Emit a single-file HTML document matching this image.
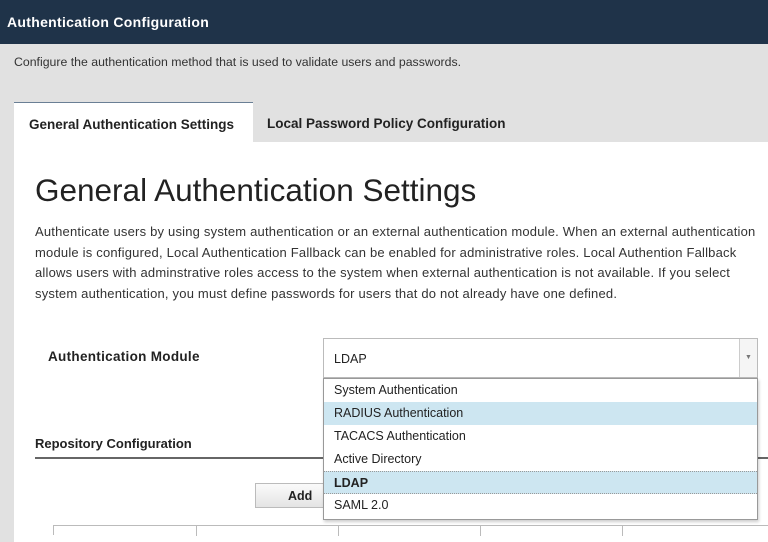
<!DOCTYPE html>
<html><head><style>
*{margin:0;padding:0;box-sizing:border-box}
body{width:768px;height:533px;overflow:hidden;background:#e1e1e1;font-family:"Liberation Sans",Arial,sans-serif;color:#222;position:relative}
.hdr{position:absolute;left:0;top:0;width:768px;height:44px;background:#1f3349;color:#fff;font-weight:bold;font-size:14px;padding:14px 0 0 7px;letter-spacing:.3px}
.sub{position:absolute;left:14px;top:55px;font-size:12.3px;color:#333}
.tab1{position:absolute;left:14px;top:102px;width:239px;height:42px;background:#fff;border-top:1px solid #6a7f95;font-weight:bold;font-size:13.5px;padding:14px 0 0 15px}
.tab2{position:absolute;left:267px;top:116px;font-weight:bold;font-size:13.5px}
.panel{position:absolute;left:14px;top:142px;width:754px;height:400px;background:#fff}
h1{position:absolute;left:35px;top:172px;font-weight:normal;font-size:31.5px;color:#222}
.p{position:absolute;left:35px;top:222px;width:728px;font-size:13px;line-height:20.7px;color:#333;letter-spacing:.2px}
.lbl{position:absolute;left:48px;top:349px;font-weight:bold;font-size:13.5px;letter-spacing:.3px}
.sel{position:absolute;left:323px;top:338px;width:435px;height:40px;border:1px solid #bbb;background:#fff;font-size:12.5px;padding:13px 0 0 10px}
.arr{position:absolute;right:0;top:0;width:18px;height:38px;border-left:1px solid #ccc;background:#f5f5f5;font-size:7px;color:#777;text-align:center;padding-top:15px}
.dd{position:absolute;left:323px;top:378px;width:435px;height:142px;border:1px solid #999;background:#fff;font-size:12.5px;box-shadow:1px 2px 3px rgba(0,0,0,.2)}
.dd div{height:23px;padding:4px 0 0 10px}
.hi{background:#cde6f1}
.rep{position:absolute;left:35px;top:436px;font-weight:bold;font-size:13px}
.line{position:absolute;left:35px;top:457px;width:733px;height:2px;background:#666}
.add{position:absolute;left:255px;top:483px;width:70px;height:25px;border:1px solid #bbb;background:linear-gradient(#fafafa,#e4e4e4);font-weight:bold;font-size:12.5px;padding:5px 0 0 32px}
.tbl{position:absolute;left:53px;top:525px;width:715px;height:10px;border-top:1px solid #bbb;border-left:1px solid #bbb}
.tbl i{position:absolute;top:0;width:1px;height:10px;background:#bbb}
</style></head><body>
<div class="hdr">Authentication Configuration</div>
<div class="sub">Configure the authentication method that is used to validate users and passwords.</div>
<div class="panel"></div>
<div class="tab1">General Authentication Settings</div>
<div class="tab2">Local Password Policy Configuration</div>
<h1>General Authentication Settings</h1>
<div class="p">Authenticate users by using system authentication or an external authentication module. When an external authentication module is configured, Local Authentication Fallback can be enabled for administrative roles. Local Authention Fallback allows users with adminstrative roles access to the system when external authentication is not available. If you select system authentication, you must define passwords for users that do not already have one defined.</div>
<div class="lbl">Authentication Module</div>
<div class="rep">Repository Configuration</div>
<div class="line"></div>
<div class="add">Add</div>
<div class="tbl"><i style="left:142px"></i><i style="left:284px"></i><i style="left:426px"></i><i style="left:568px"></i></div>
<div class="sel">LDAP<div class="arr">▼</div></div>
<div class="dd">
<div>System Authentication</div>
<div class="hi">RADIUS Authentication</div>
<div>TACACS Authentication</div>
<div>Active Directory</div>
<div class="hi" style="font-weight:bold;border-top:1px dotted #999;border-bottom:1px dotted #999">LDAP</div>
<div>SAML 2.0</div>
</div>
</body></html>
